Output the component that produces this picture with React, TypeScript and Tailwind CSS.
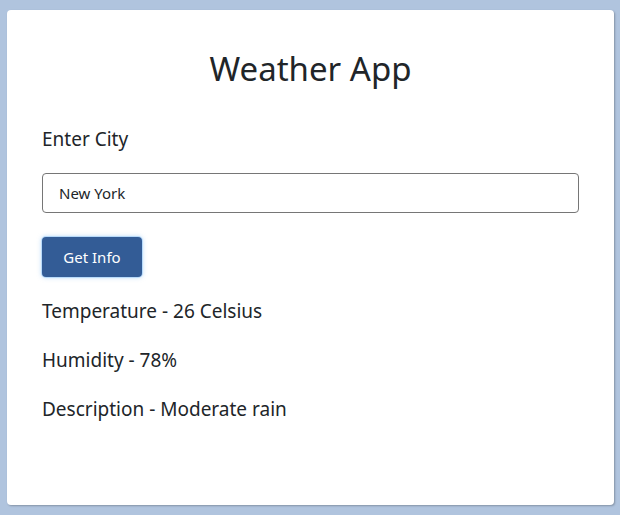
export default function App() {
  return (
    <div className="min-h-screen bg-[#b0c4de] pt-[10px] pb-[10px] pl-[7px] pr-[6px] font-['Noto_Sans',sans-serif] text-[#212529]">
      <div className="flex h-[495px] flex-col rounded-[4px] bg-white px-[35px] pt-[35px] shadow-[1px_1px_2px_rgba(0,0,0,0.25)]">
        <h1 className="text-center text-[33px] leading-[48px]">Weather App</h1>
        <label className="mt-[32px] text-[19px] leading-[28px]">Enter City</label>
        <input
          type="text"
          defaultValue="New York"
          className="mt-[20px] h-[40px] w-full rounded-[4px] border border-[#767676] px-[16px] text-[15px] text-[#212529] outline-none"
        />
        <div className="mt-[24px]">
          <button className="h-[40px] w-[100px] rounded-[4px] bg-[#335c96] text-[15px] text-white shadow-[0_0_0_1px_#b8dafa,0_0_4px_1px_rgba(140,195,245,0.5)]">
            Get Info
          </button>
        </div>
        <div className="mt-[20px] flex flex-col gap-[21px] text-[19px] leading-[28px]">
          <p>Temperature - 26 Celsius</p>
          <p>Humidity - 78%</p>
          <p>Description - Moderate rain</p>
        </div>
      </div>
    </div>
  );
}
